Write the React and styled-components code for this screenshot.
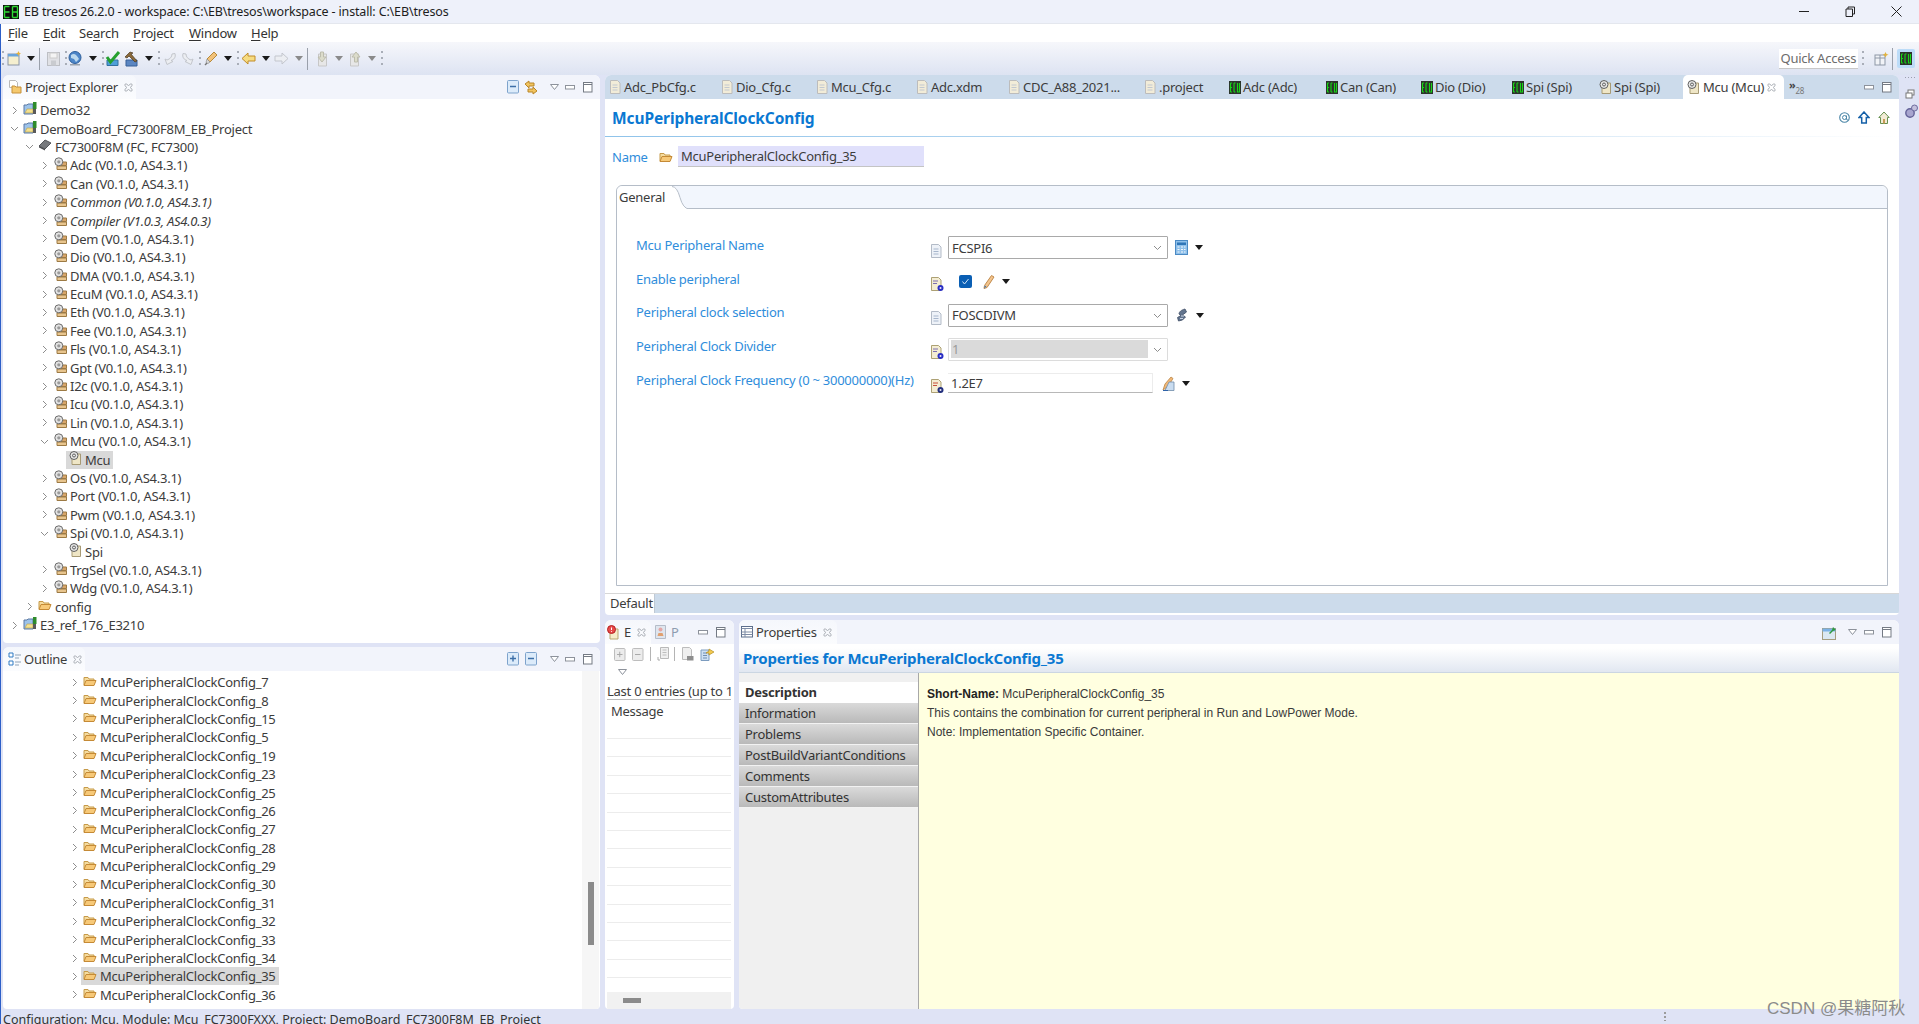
import React from 'react'
import styled, { createGlobalStyle } from 'styled-components'

const UI = '"Noto Sans", "Open Sans", sans-serif'

const Global = createGlobalStyle`
	html, body { margin: 0; padding: 0; background: #dfe3f5; overflow: hidden; }
	* { box-sizing: border-box; }
	#root { width: 1919px; height: 1024px; }
`

/* ---------- icons ---------- */
const Svg = ({ w = 16, h = 16, children }) => (
	<svg width={w} height={h} viewBox={`0 0 ${w} ${h}`} style={{ display: 'block', flex: 'none' }}>{children}</svg>
)
const Caret = () => <Svg w={8} h={5}><path d="M0 0h8L4 5z" fill="#1a1a1a" /></Svg>
const GreyCaret = () => <Svg w={8} h={5}><path d="M0 0h8L4 5z" fill="#8a8a8a" /></Svg>
const Grip = () => <Svg w={2} h={18}><path d="M0 1h2v2H0zM0 7h2v2H0zM0 13h2v2H0z" fill="#a9aeb8" /></Svg>
const Sep = () => <Svg w={1} h={22}><path d="M0 0h1v22H0z" fill="#9aa0ab" /></Svg>
const ThinSep = () => <Svg w={1} h={14}><path d="M0 0h1v14H0z" fill="#b4b4b4" /></Svg>
const Chevron = ({ open }) => (
	<Svg w={9} h={9}>
		<path d={open ? 'M1 3l3.5 3.5L8 3' : 'M3 1l3.5 3.5L3 8'} fill="none" stroke="#8d8d8d" strokeWidth="1" />
	</Svg>
)
const Folder = () => (
	<Svg w={14} h={12}>
		<path d="M1 10V2.5h4l1 1.5h5v1.5" fill="#f5dca0" stroke="#c69a49" />
		<path d="M1 10.5l2-5h10l-2 5z" fill="#f7c978" stroke="#c58a36" />
	</Svg>
)
const ProjectIco = () => (
	<Svg w={14} h={13}>
		<path d="M1 12V3h3l1-1h5v10z" fill="#9dc3ea" stroke="#5a79a3" />
		<path d="M2 11l2-4h6v4z" fill="#f3e08f" stroke="#b79f4a" strokeWidth=".6" />
		<path d="M10 0h3.500v7H10z" fill="#2e8b2b" />
		<path d="M10 7h3v5h-3z" fill="#5a5a5a" />
	</Svg>
)
const ChipIco = () => (
	<Svg w={14} h={12}>
		<path d="M1 7l6-6 6 3-6 6z" fill="#77797d" stroke="#55575b" />
		<path d="M1 7l6 3v1.5L1 8.500z" fill="#4a4b4e" />
	</Svg>
)
const ModuleIco = () => (
	<Svg w={13} h={13}>
		<path d="M6 5h6.500v3.500H6z" fill="#d9a66a" stroke="#9c7a44" />
		<path d="M3 9h9.500v3.500H3z" fill="#e8c58e" stroke="#9c7a44" />
		<circle cx="4.800" cy="4.800" r="4" fill="#e3e3e3" stroke="#6a6a6a" />
		<circle cx="4.800" cy="4.800" r="1.600" fill="#9a9a9a" />
	</Svg>
)
const ModuleDocIco = () => (
	<Svg w={13} h={14}>
		<path d="M3 3h8.500v10.500H3z" fill="#efe6c6" stroke="#a79a75" />
		<circle cx="5" cy="4.500" r="4" fill="#e6e6e6" stroke="#5f5f5f" />
		<circle cx="5" cy="4.500" r="1.500" fill="none" stroke="#5f5f5f" />
	</Svg>
)
const Ecu = () => (
	<Svg w={12} h={13}>
		<rect width="12" height="13" fill="#2c332c" />
		<path d="M1.500 2v9M1.500 2h1.500M1.500 6.500h1.500M1.500 11h1.500M5 2v9M5 2h1.500M5 11h1.500M8.500 2v9h2V2" fill="none" stroke="#16d616" strokeWidth="1.100" />
	</Svg>
)
const Close = () => (
	<Svg w={9} h={9}>
		<path d="M1 1l2 0 1.500 2L6 1h2v2L6 4.500 8 6v2H6L4.500 6 3 8H1V6l2-1.500L1 3z" fill="none" stroke="#a5a9b0" strokeWidth=".8" />
	</Svg>
)
const MenuTri = () => <Svg w={9} h={6}><path d="M.5.500h8L4.500 5.500z" fill="#fff" stroke="#8d929b" /></Svg>
const MinBtn = () => <Svg w={10} h={5}><rect x=".5" y=".5" width="9" height="3.500" fill="#fff" stroke="#8d929b" /></Svg>
const MaxBtn = () => (
	<Svg w={10} h={11}>
		<rect x=".5" y=".5" width="8.500" height="9.500" fill="#fff" stroke="#747a84" />
		<path d="M.5 2.500h8.500" stroke="#747a84" />
	</Svg>
)
const CollapseAll = () => (
	<Svg w={13} h={14}>
		<rect x=".5" y=".5" width="11" height="12.500" rx="1" fill="#dcebfa" stroke="#7ea3cc" />
		<path d="M3 6.500h6" stroke="#3d6fa8" strokeWidth="1.400" />
	</Svg>
)
const ExpandAll = () => (
	<Svg w={13} h={14}>
		<rect x=".5" y=".5" width="11" height="12.500" rx="1" fill="#dcebfa" stroke="#7ea3cc" />
		<path d="M3 6.500h6M6 3.500v6" stroke="#3d6fa8" strokeWidth="1.400" />
	</Svg>
)
const LinkArrows = () => (
	<Svg w={14} h={15}>
		<path d="M1 4l4-3v2h5v3H5v2z" fill="#f1c35d" stroke="#b9862a" />
		<path d="M13 11l-4 3v-2H4V9h5V7z" fill="#f1c35d" stroke="#b9862a" />
	</Svg>
)
const TreeIco = () => (
	<Svg w={13} h={14}>
		<path d="M1 1h4v4H1zM1 9h4v4H1z" fill="#fff" stroke="#2f7bc4" />
		<path d="M7 3h6M7 6h4M7 10h6M7 13h4" stroke="#8fa3b8" />
	</Svg>
)
const ProjExplorerIco = () => (
	<Svg w={14} h={14}>
		<path d="M1.500.5h6l2 2v5h-8z" fill="#fff" stroke="#b9b9b9" />
		<path d="M4 13V6h3l1 1h5v6z" fill="#f5c96e" stroke="#c6913a" />
	</Svg>
)
const ErrIco = () => (
	<Svg w={14} h={15}>
		<path d="M3 14h8V4H3z" fill="#f6ecc9" stroke="#b9a771" />
		<circle cx="4.500" cy="4.500" r="4" fill="#e84b4b" stroke="#b42020" />
		<path d="M4.500 2.500v2.500M4.500 6v.8" stroke="#fff" />
	</Svg>
)
const ProblemIco = () => (
	<Svg w={12} h={14}>
		<path d="M.5.5h10v13H.5z" fill="#dfe5ee" stroke="#b4bcc9" />
		<circle cx="5.500" cy="4.500" r="2" fill="#e3a6a6" />
		<path d="M2.500 11l1-3h4l1 3z" fill="#e0a070" />
	</Svg>
)
const PropsIco = () => (
	<Svg w={12} h={12}>
		<rect x=".5" y=".5" width="11" height="10.500" fill="#fff" stroke="#5d6f8c" />
		<path d="M.5 2.500h11M4 2.500v8.500M.5 6h11M.5 8.500h11" stroke="#7f8da6" />
	</Svg>
)
const TabDoc = () => (
	<Svg w={13} h={14}>
		<path d="M1.500.5h7l2.500 2.500v10.500H1.500z" fill="#f2ecd8" stroke="#bcbcbc" />
		<path d="M3.500 5h5M3.500 7.500h5M3.500 10h5" stroke="#c2c8d0" />
	</Svg>
)
const PaperIco = () => (
	<Svg w={13} h={14}>
		<path d="M1.500.5h7l2.500 2.500v10.500H1.500z" fill="#eef2f8" stroke="#b3bbc7" />
		<path d="M3.500 5h5M3.500 7.500h5M3.500 10h5" stroke="#a7b6cc" />
	</Svg>
)
const BoxPlus = () => (
	<Svg w={12} h={13}>
		<rect x=".5" y=".5" width="10.500" height="12" rx="1" fill="#ececec" stroke="#bdbdbd" />
		<path d="M3 6.500h5.500M5.750 3.700v5.500" stroke="#a9a9a9" />
	</Svg>
)
const BoxMinus = () => (
	<Svg w={12} h={13}>
		<rect x=".5" y=".5" width="10.500" height="12" rx="1" fill="#ececec" stroke="#bdbdbd" />
		<path d="M3 6.500h5.500" stroke="#a9a9a9" />
	</Svg>
)
const ScrollDoc = () => (
	<Svg w={13} h={14}>
		<path d="M3.500.5h8v11h-8z" fill="#efefef" stroke="#b9b9b9" />
		<path d="M5.500 3h4M5.500 5.500h4M5.500 8h4" stroke="#bdbdbd" />
		<path d="M1 10v3h2" fill="none" stroke="#aaa" />
	</Svg>
)
const ClearDoc = () => (
	<Svg w={13} h={14}>
		<path d="M1.500.5h7l2 2v10h-9z" fill="#efefef" stroke="#bcbcbc" />
		<path d="M6 9h6.500v4.500H6z" fill="#8e8e8e" />
	</Svg>
)
const OpenLog = () => (
	<Svg w={14} h={14}>
		<path d="M1 3h8v10.500H1z" fill="#cfe0f2" stroke="#7c9cbf" />
		<path d="M3 6h4M3 8.500h4M3 11h4" stroke="#6f8eb3" />
		<path d="M6 6l3-2V2l5 3-5 3V6z" fill="#f3c94f" stroke="#b48f25" strokeWidth=".7" />
	</Svg>
)
const PinIco = () => (
	<Svg w={15} h={15}>
		<rect x=".5" y="3.500" width="13" height="11" fill="#dbe8f2" stroke="#a59d7f" />
		<path d="M.5 3.500h13v3H.5z" fill="#7cb2e6" />
		<path d="M7 8l3-3 1-3 3 3-3 1-3 3z" fill="#2f9a3f" />
	</Svg>
)
const AtIco = () => (
	<Svg w={11} h={13}>
		<circle cx="5.500" cy="6.500" r="4.800" fill="none" stroke="#4c87a8" strokeWidth="1.100" />
		<circle cx="5.500" cy="6.500" r="2" fill="none" stroke="#4c87a8" />
		<path d="M7.500 4.500v3.500q0 1.200 1.400 1" fill="none" stroke="#4c87a8" />
	</Svg>
)
const UpIco = () => (
	<Svg w={12} h={13}>
		<path d="M6 1l5 5.500H8.300v5.500H3.700V6.500H1z" fill="#fff" stroke="#1560a8" strokeWidth="1.500" />
	</Svg>
)
const HomeIco = () => (
	<Svg w={12} h={13}>
		<path d="M6 1L.8 6.500h1.700v6h7v-6h1.700z" fill="#f3ecd6" stroke="#66914f" />
		<path d="M5 8h2v4.500H5z" fill="#c79b56" />
	</Svg>
)
const CalcIco = () => (
	<Svg w={13} h={15}>
		<rect x=".5" y=".5" width="12" height="14" fill="#8fc0ea" stroke="#4b8ac4" />
		<rect x="2" y="2.500" width="9" height="2.500" fill="#2f76b8" />
		<path d="M2.500 7h2M6 7h2M9 7h1.500M2.500 9.500h2M6 9.500h2M9 9.500h1.500M2.500 12h2M6 12h2M9 12h1.500" stroke="#f4f8fc" />
	</Svg>
)
const PencilIco = () => (
	<Svg w={12} h={15}>
		<path d="M8.500 1.500l2.500 1.500L4 13.500 1 14.500l.5-3z" fill="#f4c48c" stroke="#c08a4c" />
		<path d="M1 14.500l1-3 1.500 1z" fill="#3f78b8" />
	</Svg>
)
const ToolIco = () => (
	<Svg w={13} h={15}>
		<path d="M9 1C5 2 3 4 3 6l2 1.500-3.500 2 1 3.500 4-1 3-3-3-2 4-3z" fill="#62748e" stroke="#3b4a62" strokeWidth=".8" />
		<path d="M5 8h3M4 10.500h3" stroke="#c9d4e4" />
	</Svg>
)
const CalcPen = () => (
	<Svg w={13} h={15}>
		<path d="M1 14l2-6 6-7 2 1.500-5 8z" fill="#f2b877" stroke="#b98548" strokeWidth=".8" />
		<path d="M7 6h5v8.500H3z" fill="#c9dcf0" stroke="#6e8ba8" strokeWidth=".8" />
		<path d="M1 14.500h5" stroke="#2f62a8" />
	</Svg>
)
const AttrDoc = ({ mark, glyph = '#7c6fb0' }) => (
	<Svg w={14} h={15}>
		<path d="M1.500.5h7l2.500 2.500V13.500h-9.500z" fill="#f4edd3" stroke="#ada174" />
		<path d="M3 4h5M3 6.500h4" stroke={glyph} />
		<circle cx="10.500" cy="11" r="3" fill={mark} />
		<circle cx="10.500" cy="11" r="1" fill="#efe9f6" />
	</Svg>
)
const NewWiz = () => (
	<Svg w={15} h={15}>
		<rect x="1" y="3" width="11" height="11" fill="#f5efcf" stroke="#8a95a5" />
		<path d="M1 3h11v2.500H1z" fill="#6aa5dc" />
		<path d="M11.500 0l.8 1.800L14 2.500l-1.700.8-.8 1.800-.8-1.800L9 2.500l1.700-.7z" fill="#e8b33a" />
	</Svg>
)
const SaveIco = () => (
	<Svg w={13} h={14}>
		<rect x=".5" y=".5" width="12" height="13" fill="#e0e1e5" stroke="#bdbfc4" />
		<rect x="3" y="1" width="7" height="5" fill="#f4f4f4" stroke="#ccc" />
		<rect x="4" y="8.500" width="5" height="5" fill="#c9cbcf" />
	</Svg>
)
const GlobeIco = () => (
	<Svg w={15} h={15}>
		<circle cx="7" cy="6.500" r="6" fill="#4d86c9" stroke="#2e5f9a" />
		<path d="M3 4q3-2 5 0t3 4l-3 3-2-3-3-1z" fill="#bcd9ee" />
		<path d="M2 13h10v1.500H2z" fill="#9ba3ad" />
	</Svg>
)
const CheckBuild = () => (
	<Svg w={16} h={15}>
		<path d="M2 9h11v5.500H2z" fill="#4e9fd8" stroke="#32709f" />
		<path d="M2 6l3.500 5L14 1" fill="none" stroke="#25a02f" strokeWidth="3" />
	</Svg>
)
const BuildIco = () => (
	<Svg w={15} h={16}>
		<path d="M2 15V9h11v6z" fill="#5b86c2" stroke="#375f97" />
		<path d="M1 6l5-5 3 1-2 1 6 7-2 1-6-6-2 2z" fill="#8b6a3a" stroke="#4c3a1f" strokeWidth=".7" />
	</Svg>
)
const UndoIco = () => (
	<Svg w={14} h={14}>
		<path d="M12 1.500c1 4-1 6-4 7l2 1-6 3-2-5.500 2 1c3-1 5-3 5-6z" fill="#eceef2" stroke="#c3c6cc" />
	</Svg>
)
const RedoIco = () => (
	<Svg w={14} h={14}>
		<path d="M2 1.500c-1 4 1 6 4 7l-2 1 6 3 2-5.500-2 1c-3-1-5-3-5-6z" fill="#eceef2" stroke="#c3c6cc" />
	</Svg>
)
const PinEdit = () => (
	<Svg w={15} h={15}>
		<path d="M10 1l3 3-7 7-3-3z" fill="#f2c27a" stroke="#b78a3a" />
		<path d="M3 8l3 3-2 1.500-2-1z" fill="#d9d9d9" stroke="#8e8e8e" strokeWidth=".7" />
		<path d="M1 14l2-2" stroke="#777" strokeWidth="1.400" />
	</Svg>
)
const BackArrow = () => (
	<Svg w={15} h={13}>
		<path d="M1 6.500L7 1v3h7v5H7v3z" fill="#f6dc82" stroke="#c28c26" />
	</Svg>
)
const FwdArrow = () => (
	<Svg w={15} h={13}>
		<path d="M14 6.500L8 1v3H1v5h7v3z" fill="#eceef2" stroke="#c3c6cd" />
	</Svg>
)
const DocDown = () => (
	<Svg w={14} h={16}>
		<path d="M3.500 3h8v12h-8z" fill="#e7e7e7" stroke="#c7c7c7" />
		<path d="M5.500 1h3v5H11l-4 5-4-5h2.500z" fill="#dcdccb" stroke="#bdbdad" />
	</Svg>
)
const DocUp = () => (
	<Svg w={14} h={16}>
		<path d="M1.500 3h8v12h-8z" fill="#e7e7e7" stroke="#c7c7c7" />
		<path d="M5.500 11h3V6H11L7 1 3 6h2.500z" fill="#dcdccb" stroke="#bdbdad" />
	</Svg>
)
const PerspIco = () => (
	<Svg w={15} h={15}>
		<rect x="1" y="4" width="10" height="10" fill="#f1f3f7" stroke="#8d97a6" />
		<path d="M1 7h10M6 4v10" stroke="#8d97a6" />
		<path d="M11.500 1l1 2 2 .8-2 .7-1 2-1-2-2-.7 2-.8z" fill="#e2b23d" />
	</Svg>
)
const RestoreTrim = () => (
	<Svg w={10} h={10}>
		<rect x="3" y="1" width="6" height="5" fill="#fff" stroke="#777" />
		<rect x="1" y="4" width="6" height="5" fill="#fff" stroke="#777" />
	</Svg>
)
const GearTrim = () => (
	<Svg w={13} h={15}>
		<circle cx="5" cy="9" r="4.200" fill="#a8a5cf" stroke="#656399" strokeWidth="1.400" />
		<circle cx="9.500" cy="4" r="3" fill="#c3c1de" stroke="#6d6b9e" />
	</Svg>
)
const LogoDisplay = () => (
	<Svg w={16} h={14}>
		<rect width="16" height="14" fill="#0c0c0c" />
		<path d="M1.500 1.500h5M1.500 1.500v11M1.500 7h5M1.500 12.500h5M9.500 1.500h5M9.500 1.500v11M9.500 7h5M9.500 12.500h5M14.500 1.500v11" fill="none" stroke="#2fdc35" strokeWidth="1.400" />
	</Svg>
)

/* ---------- shell ---------- */
const Page = styled.div`
	width: 1919px;
	height: 1024px;
	position: relative;
	overflow: hidden;
	display: flex;
	flex-direction: column;
	background: #dfe3f5;
	font-family: ${UI};
	font-size: 13px;
	letter-spacing: -0.25px;
	color: #3c3c3c;
`
const TitleBar = styled.div`
	height: 24px;
	flex: none;
	display: flex;
	align-items: center;
	background: #eef1fa;
	padding-left: 3px;
	border-bottom: 1px solid #e4e7ee;
`
const TitleText = styled.span`
	margin-left: 5px;
	font-size: 12.5px;
	letter-spacing: -0.15px;
	color: #1d1d1d;
`
const WinButtons = styled.div`
	margin-left: auto;
	display: flex;
	align-items: center;
`
const WinBtn = styled.div`
	width: 46px;
	height: 24px;
	display: flex;
	align-items: center;
	justify-content: center;
`
const Body = styled.div`
	flex: 1;
	min-height: 0;
	display: flex;
	flex-direction: column;
	border-left: 1px solid #2d5fc8;
`
const MenuBar = styled.div`
	height: 18px;
	flex: none;
	background: #fff;
	display: flex;
	align-items: center;
	color: #333;
`
const MenuItem = styled.span`
	width: ${p => p.$w}px;
	u { text-underline-offset: 2px; }
	&:first-child { margin-left: 7px; }
`
const ToolBar = styled.div`
	height: 33px;
	flex: none;
	display: flex;
	align-items: center;
	background: linear-gradient(#f6f7fb, #dde3f2);
`
const QuickAccess = styled.div`
	width: 79px;
	height: 20px;
	margin-left: auto;
	background: #fff;
	border-bottom: 1px solid #c8c8c8;
	line-height: 19px;
	padding-left: 2px;
	color: #6c6c6c;
	white-space: nowrap;
`
const ToolRight = styled.div`
	margin-left: 4px;
	margin-right: 4px;
`
const EcuFrame = styled.div`
	padding: 3px;
	background: #bcdcf8;
	border-radius: 2px;
`
const Slot = styled.div`
	flex: none;
	display: flex;
	align-items: center;
	justify-content: center;
	width: ${p => p.$w}px;
	margin-left: ${p => p.$ml}px;
`
const StripRow = styled.div`
	display: flex;
	align-items: center;
	flex: none;
`
const Workspace = styled.div`
	height: 934px;
	flex: none;
	display: flex;
	padding-left: 2px;
`
const LeftColumn = styled.div`
	width: 597px;
	flex: none;
	display: flex;
	flex-direction: column;
	gap: 4px;
`
const CenterColumn = styled.div`
	width: 1294px;
	flex: none;
	margin-left: 5px;
	display: flex;
	flex-direction: column;
	gap: 5px;
`
const TrimBar = styled.div`
	width: 20px;
	flex: none;
	padding: 2px 0 0 6px;
	display: flex;
	flex-direction: column;
	gap: 5px;
`
const TrimGrip = styled.div`
	width: 12px;
	height: 1px;
	margin-bottom: 6px;
	background: repeating-linear-gradient(90deg, #9b9fae 0 1px, transparent 1px 3px);
`
const Panel = styled.div`
	height: ${p => p.$h}px;
	width: ${p => (p.$w ? p.$w + 'px' : 'auto')};
	flex: none;
	background: #fff;
	border-radius: 6px 6px 4px 4px;
	display: flex;
	flex-direction: column;
	overflow: hidden;
`
const PanelTabs = styled.div`
	height: 24px;
	flex: none;
	display: flex;
	align-items: center;
	background: #f2f4fb;
`
const ViewTab = styled.div`
	height: 100%;
	width: ${p => p.$w}px;
	flex: none;
	display: flex;
	align-items: center;
	padding-left: ${p => p.$pl || 5}px;
	background: ${p => (p.$active ? 'linear-gradient(#f5f7fc, #fbfcfe)' : 'transparent')};
	border-radius: 6px 6px 0 0;
	color: ${p => (p.$dim ? '#8e9cb0' : '#3c3c3c')};
`
const TabLabel = styled.span`
	margin: 0 ${p => p.$mr ?? 6}px 0 ${p => p.$ml || 3}px;
	white-space: nowrap;
`
const ViewActions = styled.div`
	margin-left: auto;
	margin-right: ${p => p.$mr || 7}px;
	display: flex;
	align-items: center;
`
const TreeBody = styled.div`
	flex: 1;
	min-height: 0;
	display: flex;
	overflow: hidden;
`
const TreeList = styled.div`
	flex: 1;
	padding-top: 2px;
`
const TreeRow = styled.div`
	height: 18.4px;
	display: flex;
	align-items: center;
	padding-left: ${p => 5 + p.$level * 15}px;
	font-style: ${p => (p.$italic ? 'italic' : 'normal')};
	white-space: nowrap;
`
const ChevronSlot = styled.div`
	width: 13px;
	flex: none;
	display: flex;
	justify-content: center;
`
const RowBody = styled.div`
	display: flex;
	align-items: center;
	height: 18px;
	padding: 0 3px 0 2px;
	background: ${p => (p.$selected ? '#d9d9d9' : 'transparent')};
`
const RowIcon = styled.div`
	width: 14px;
	flex: none;
	display: flex;
	justify-content: center;
	margin-top: -3px;
`
const RowText = styled.span`
	margin-left: 3px;
`
const ScrollTrack = styled.div`
	width: 17px;
	flex: none;
	margin-right: 1px;
	background: #f6f6f6;
	padding: 211px 0 0 6px;
`
const ScrollThumb = styled.div`
	width: 6px;
	height: 63px;
	background: #8b8b8b;
`

/* ---------- editor ---------- */
const EditorTabs = styled.div`
	height: 24px;
	flex: none;
	display: flex;
	align-items: center;
	background: #ccdbeb;
`
const EditorTab = styled.div`
	height: 100%;
	width: ${p => p.$w}px;
	flex: none;
	display: flex;
	align-items: center;
	padding-left: 4px;
	color: #3c3c3c;
	background: ${p => (p.$active ? '#fff' : 'transparent')};
	border-radius: 5px 5px 0 0;
	gap: ${p => (p.$active ? 3 : 2)}px;
	white-space: nowrap;
`
const OverflowMark = styled.span`
	margin-left: 5px;
	font-size: 11px;
	font-weight: 700;
	color: #444;
	line-height: 1;
	margin-top: -6px;
	small {
		font-size: 8px;
		font-weight: 400;
		color: #777;
		position: relative;
		top: 5px;
	}
`
const FormHeader = styled.div`
	height: 38px;
	flex: none;
	display: flex;
	align-items: center;
	padding: 0 9px 0 7px;
	border-bottom: 1px solid transparent;
	border-image: linear-gradient(90deg, #8fc3ea, #d5e7f6 70%, #fff) 1;
	gap: 8px;
`
const FormTitle = styled.h1`
	margin: 0 auto 0 0;
	font-size: 15.5px;
	letter-spacing: -0.1px;
	font-weight: 700;
	color: #0a78d2;
`
const EditorBody = styled.div`
	flex: 1;
	min-height: 0;
	padding: 9px 11px 0 7px;
	display: flex;
	flex-direction: column;
`
const NameRow = styled.div`
	height: 21px;
	display: flex;
	align-items: center;
	flex: none;
`
const NameLabel = styled.span`
	width: 47px;
	color: #2f8ddb;
`
const NameInput = styled.div`
	width: 246px;
	height: 21px;
	margin-left: 5px;
	background: #e0e0fb;
	border-bottom: 1px solid #c4c4c4;
	padding-left: 3px;
	line-height: 20px;
`
const Section = styled.div`
	margin: 18px 0 0 4px;
	height: 401px;
	flex: none;
	border: 1px solid #b5bdc8;
	border-radius: 6px 6px 0 0;
`
const SectionStrip = styled.div`
	height: 23px;
	display: flex;
	background: #f2f6fd;
	border-bottom: 1px solid #b5bdc8;
	border-radius: 6px 6px 0 0;
`
const SectionTab = styled.div`
	height: 23px;
	width: 55px;
	background: #fff;
	padding-left: 2px;
	line-height: 22px;
	border-radius: 6px 0 0 0;
`
const FormGrid = styled.div`
	padding: 22px 0 0 19px;
`
const FormRow = styled.div`
	height: 33.8px;
	display: flex;
	align-items: center;
`
const FieldLabel = styled.span`
	width: 292px;
	flex: none;
	color: #2f8ddb;
	margin-bottom: 6px;
	white-space: nowrap;
`
const AttrSlot = styled.div`
	width: 17px;
	flex: none;
	margin-top: 6px;
	display: flex;
	justify-content: center;
`
const Combo = styled.div`
	width: 220px;
	height: 23px;
	margin-left: 3px;
	flex: none;
	border: 1px solid ${p => (p.$off ? '#dcdcdc' : '#a9a9a9')};
	background: #fff;
	display: flex;
	align-items: center;
	padding: 0 5px 0 2px;
	justify-content: space-between;
	border-radius: 1px;
`
const ComboValue = styled.span`
	flex: ${p => (p.$off ? 1 : 'none')};
	background: ${p => (p.$off ? '#dadada' : 'transparent')};
	color: ${p => (p.$off ? '#9a9a9a' : '#3c3c3c')};
	line-height: 18px;
	padding-left: 1px;
	margin-right: ${p => (p.$off ? 5 : 0)}px;
`
const TextField = styled.div`
	width: 205px;
	height: 20px;
	margin-left: 3px;
	flex: none;
	border-top: 1px solid #ececec;
	border-right: 1px solid #ececec;
	border-bottom: 1px solid #b8b8b8;
	padding-left: 3px;
	line-height: 19px;
`
const Check = styled.div`
	width: 13px;
	height: 13px;
	margin-left: 14px;
	flex: none;
	background: #0a5fb4;
	border-radius: 2px;
	display: flex;
	align-items: center;
	justify-content: center;
`
const Trailing = styled.div`
	display: flex;
	align-items: center;
	gap: 7px;
	margin-left: ${p => p.$ml}px;
`
const DefaultBar = styled.div`
	margin: auto -11px 2px -7px;
	height: 20px;
	flex: none;
	background: #ccdbeb;
	border-top: 1px solid #d7d7d7;
	display: flex;
`
const DefaultTab = styled.div`
	width: 50px;
	height: 19px;
	background: #fff;
	padding-left: 5px;
	line-height: 18px;
	border-right: 1px solid #bfc9d4;
`

/* ---------- bottom ---------- */
const BottomRow = styled.div`
	flex: 1;
	min-height: 0;
	display: flex;
	gap: 5px;
`
const ProblemsTools = styled.div`
	height: 20px;
	flex: none;
	padding-top: 3px;
	margin-left: 9px;
`
const TriRow = styled.div`
	height: 16px;
	padding-left: 13px;
	display: flex;
	align-items: center;
`
const ProblemsSummary = styled.div`
	margin: 3px 0 0 2px;
	height: 17px;
	line-height: 17px;
	width: 124px;
	flex: none;
	overflow: hidden;
	white-space: nowrap;
	border-bottom: 1px solid #b9b9b9;
`
const ProblemsTable = styled.div`
	margin-left: 2px;
	width: 124px;
	flex: 1;
	min-height: 0;
	overflow: hidden;
`
const TableHead = styled.div`
	height: 39px;
	padding: 2px 0 0 4px;
	line-height: 18px;
	border-bottom: 1px solid #ececec;
`
const TableLine = styled.div`
	height: 18.400px;
	border-bottom: 1px solid #ececec;
`
const HScroll = styled.div`
	margin-left: 2px;
	width: 124px;
	height: 17px;
	flex: none;
	background: #f1f1f1;
	display: flex;
	align-items: center;
	padding-left: 16px;
`
const HThumb = styled.div`
	width: 18px;
	height: 5px;
	background: #8b8b8b;
`
const PropsHeader = styled.div`
	height: 29px;
	flex: none;
	padding-left: 4px;
	display: flex;
	align-items: center;
	background: linear-gradient(#fff 15%, #e1e7f1);
	border-bottom: 1px solid #cbd6e2;
`
const PropsTitle = styled.h2`
	margin: 0;
	font-size: 15px;
	letter-spacing: -0.2px;
	font-weight: 700;
	color: #0a78d2;
`
const PropsBody = styled.div`
	flex: 1;
	min-height: 0;
	display: flex;
`
const SideList = styled.div`
	width: 180px;
	flex: none;
	background: #f0f0f0;
	padding-top: 9px;
	border-right: 1px solid #a8a8a8;
`
const SideItem = styled.div`
	height: 21px;
	padding-left: 6px;
	line-height: 20px;
	color: #333;
	white-space: nowrap;
	font-weight: ${p => (p.$active ? 700 : 400)};
	background: ${p => (p.$active ? '#fff' : 'linear-gradient(#dadada, #b9b9b9)')};
	border-bottom: 1px solid ${p => (p.$active ? '#fff' : '#f2f2f2')};
`
const YellowPane = styled.div`
	flex: 1;
	background: #ffffe0;
	padding: 12px 0 0 8px;
	font-family: "Liberation Sans", Arial, sans-serif;
	font-size: 12px;
	letter-spacing: 0;
	line-height: 19.2px;
	color: #3a3a3a;
	b { color: #222; }
`
const StatusBar = styled.div`
	height: 15px;
	flex: none;
	padding-left: 2px;
	font-size: 12.500px;
	letter-spacing: 0;
	line-height: 21px;
	color: #333;
	overflow: hidden;
	white-space: nowrap;
	position: relative;
`
const StatusGrip = styled.div`
	position: absolute;
	left: 1663px;
	top: 3px;
	width: 2px;
	height: 9px;
	background: repeating-linear-gradient(#9b9b9b 0 2px, transparent 2px 4px);
`
const Watermark = styled.div`
	position: absolute;
	left: 1767px;
	top: 994px;
	font-family: "Liberation Sans", "Noto Sans CJK SC", sans-serif;
	font-size: 17px;
	letter-spacing: 0;
	color: #8b8b8b;
	white-space: nowrap;
`

/* ---------- data ---------- */
const modules = [
	['Adc (V0.1.0, AS4.3.1)'], ['Can (V0.1.0, AS4.3.1)'], ['Common (V0.1.0, AS4.3.1)', 'i'], ['Compiler (V1.0.3, AS4.0.3)', 'i'],
	['Dem (V0.1.0, AS4.3.1)'], ['Dio (V0.1.0, AS4.3.1)'], ['DMA (V0.1.0, AS4.3.1)'], ['EcuM (V0.1.0, AS4.3.1)'],
	['Eth (V0.1.0, AS4.3.1)'], ['Fee (V0.1.0, AS4.3.1)'], ['Fls (V0.1.0, AS4.3.1)'], ['Gpt (V0.1.0, AS4.3.1)'],
	['I2c (V0.1.0, AS4.3.1)'], ['Icu (V0.1.0, AS4.3.1)'], ['Lin (V0.1.0, AS4.3.1)'],
]
const projectTree = [
	{ text: 'Demo32', level: 0, icon: ProjectIco },
	{ text: 'DemoBoard_FC7300F8M_EB_Project', level: 0, icon: ProjectIco, open: true },
	{ text: 'FC7300F8M (FC, FC7300)', level: 1, icon: ChipIco, open: true },
	...modules.map(([text, i]) => ({ text, level: 2, icon: ModuleIco, italic: !!i })),
	{ text: 'Mcu (V0.1.0, AS4.3.1)', level: 2, icon: ModuleIco, open: true },
	{ text: 'Mcu', level: 3, icon: ModuleDocIco, leaf: true, selected: true },
	{ text: 'Os (V0.1.0, AS4.3.1)', level: 2, icon: ModuleIco },
	{ text: 'Port (V0.1.0, AS4.3.1)', level: 2, icon: ModuleIco },
	{ text: 'Pwm (V0.1.0, AS4.3.1)', level: 2, icon: ModuleIco },
	{ text: 'Spi (V0.1.0, AS4.3.1)', level: 2, icon: ModuleIco, open: true },
	{ text: 'Spi', level: 3, icon: ModuleDocIco, leaf: true },
	{ text: 'TrgSel (V0.1.0, AS4.3.1)', level: 2, icon: ModuleIco },
	{ text: 'Wdg (V0.1.0, AS4.3.1)', level: 2, icon: ModuleIco },
	{ text: 'config', level: 1, icon: Folder },
	{ text: 'E3_ref_176_E3210', level: 0, icon: ProjectIco },
]
const outlineTree = [7, 8, 15, 5, 19, 23, 25, 26, 27, 28, 29, 30, 31, 32, 33, 34, 35, 36].map(n => ({
	text: `McuPeripheralClockConfig_${n}`, level: 4, icon: Folder, selected: n === 35,
}))
const editorTabs = [
	['Adc_PbCfg.c', 112], ['Dio_Cfg.c', 95], ['Mcu_Cfg.c', 100], ['Adc.xdm', 92], ['CDC_A88_2021...', 136], ['.project', 85],
	['Adc (Adc)', 97, 'ecu'], ['Can (Can)', 95, 'ecu'], ['Dio (Dio)', 91, 'ecu'], ['Spi (Spi)', 87, 'ecu'], ['Spi (Spi)', 88, 'mod'],
]
const sideItems = ['Description', 'Information', 'Problems', 'PostBuildVariantConditions', 'Comments', 'CustomAttributes']

// items sit at given centre x, distances turned into margins between them
const Strip = ({ items }) => {
	let edge = null
	return (
		<StripRow>
			{items.map(([center, Icon, w = 15, props], i) => {
				const ml = edge === null ? 0 : center - w / 2 - edge
				edge = center + w / 2
				return <Slot key={i} $w={w} $ml={ml}><Icon {...props} /></Slot>
			})}
		</StripRow>
	)
}

const Tree = ({ rows }) => (
	<TreeList>
		{rows.map(({ text, level, icon: Icon, open, italic, leaf, selected }) => (
			<TreeRow key={text + level} $level={level} $italic={italic}>
				<ChevronSlot>{!leaf && <Chevron open={open} />}</ChevronSlot>
				<RowBody $selected={selected}>
					<RowIcon><Icon /></RowIcon>
					<RowText>{text}</RowText>
				</RowBody>
			</TreeRow>
		))}
	</TreeList>
)

const FramedEcu = () => <EcuFrame><Ecu /></EcuFrame>

const toolItems = [
	[3, Grip, 3], [15, NewWiz], [31, Caret, 8], [40, Sep, 1], [54, SaveIco], [66, Grip, 3], [76, GlobeIco], [93, Caret, 8],
	[103, Grip, 3], [113, CheckBuild], [132, BuildIco], [149, Caret, 8], [159, Grip, 3], [170, UndoIco], [188, RedoIco],
	[200, Grip, 3], [212, PinEdit], [228, Caret, 8], [238, Grip, 3], [249, BackArrow], [266, Caret, 8], [282, FwdArrow],
	[299, GreyCaret, 8], [308, Sep, 1], [322, DocDown], [339, GreyCaret, 8], [356, DocUp], [372, GreyCaret, 8], [382, Grip, 3],
]

function App() {
	return (
		<Page>
			<Global />
			<TitleBar>
				<LogoDisplay />
				<TitleText>EB tresos 26.2.0 - workspace: C:\EB\tresos\workspace - install: C:\EB\tresos</TitleText>
				<WinButtons>
					<WinBtn><Svg w={11} h={11}><path d="M0 5.500h10" stroke="#222" /></Svg></WinBtn>
					<WinBtn><Svg w={11} h={11}><path d="M1 3h6.500v7.500H1zM3 3V1h6.500v7H7.500" fill="none" stroke="#222" /></Svg></WinBtn>
					<WinBtn><Svg w={11} h={11}><path d="M.5.500l10 10M10.500.500l-10 10" stroke="#222" /></Svg></WinBtn>
				</WinButtons>
			</TitleBar>
			<Body>
				<MenuBar>
					<MenuItem $w={35}><u>F</u>ile</MenuItem>
					<MenuItem $w={36}><u>E</u>dit</MenuItem>
					<MenuItem $w={54}>Se<u>a</u>rch</MenuItem>
					<MenuItem $w={56}><u>P</u>roject</MenuItem>
					<MenuItem $w={62}><u>W</u>indow</MenuItem>
					<MenuItem $w={40}><u>H</u>elp</MenuItem>
				</MenuBar>
				<ToolBar>
					<Strip items={toolItems} />
					<QuickAccess>Quick Access</QuickAccess>
					<ToolRight>
						<Strip items={[[1862, Grip, 3], [1880, PerspIco], [1891, Sep, 1], [1905, FramedEcu, 18]]} />
					</ToolRight>
				</ToolBar>
				<Workspace>
					<LeftColumn>
						<Panel $h={568}>
							<PanelTabs>
								<ViewTab $w={133} $active>
									<ProjExplorerIco />
									<TabLabel>Project Explorer</TabLabel>
									<Close />
								</ViewTab>
								<ViewActions>
									<Strip items={[[510, CollapseAll], [528, LinkArrows], [551, MenuTri, 9], [567, MinBtn, 10], [585, MaxBtn, 10]]} />
								</ViewActions>
							</PanelTabs>
							<TreeBody><Tree rows={projectTree} /></TreeBody>
						</Panel>
						<Panel $h={362}>
							<PanelTabs>
								<ViewTab $w={82} $active>
									<TreeIco />
									<TabLabel>Outline</TabLabel>
									<Close />
								</ViewTab>
								<ViewActions>
									<Strip items={[[510, ExpandAll], [528, CollapseAll], [551, MenuTri, 9], [567, MinBtn, 10], [585, MaxBtn, 10]]} />
								</ViewActions>
							</PanelTabs>
							<TreeBody>
								<Tree rows={outlineTree} />
								<ScrollTrack><ScrollThumb /></ScrollTrack>
							</TreeBody>
						</Panel>
					</LeftColumn>
					<CenterColumn>
						<Panel $h={540}>
							<EditorTabs>
								{editorTabs.map(([label, w, kind], i) => (
									<EditorTab key={i} $w={w}>
										{kind === 'ecu' ? <Ecu /> : kind === 'mod' ? <ModuleDocIco /> : <TabDoc />}
										<span>{label}</span>
									</EditorTab>
								))}
								<EditorTab $w={101} $active>
									<ModuleDocIco />
									<span>Mcu (Mcu)</span>
									<Close />
								</EditorTab>
								<OverflowMark>»<small>28</small></OverflowMark>
								<ViewActions>
									<Strip items={[[1866, MinBtn, 10], [1884, MaxBtn, 10]]} />
								</ViewActions>
							</EditorTabs>
							<FormHeader>
								<FormTitle>McuPeripheralClockConfig</FormTitle>
								<AtIco />
								<UpIco />
								<HomeIco />
							</FormHeader>
							<EditorBody>
								<NameRow>
									<NameLabel>Name</NameLabel>
									<Folder />
									<NameInput>McuPeripheralClockConfig_35</NameInput>
								</NameRow>
								<Section>
									<SectionStrip>
										<SectionTab>General</SectionTab>
										<Svg w={17} h={23}>
											<path d="M0 0q5 0 8 11t9 12H0z" fill="#fff" />
											<path d="M0 .5q5 0 8 11t9 11.500" fill="none" stroke="#b5bdc8" />
										</Svg>
									</SectionStrip>
									<FormGrid>
										<FormRow>
											<FieldLabel>Mcu Peripheral Name</FieldLabel>
											<AttrSlot><PaperIco /></AttrSlot>
											<Combo>
												<ComboValue>FCSPI6</ComboValue>
												<Chevron open />
											</Combo>
											<Trailing $ml={7}><CalcIco /><Caret /></Trailing>
										</FormRow>
										<FormRow>
											<FieldLabel>Enable peripheral</FieldLabel>
											<AttrSlot><AttrDoc mark="#2a2fc4" /></AttrSlot>
											<Check>
												<Svg w={9} h={9}><path d="M1.500 4.500l2 2.500 4-5" fill="none" stroke="#cfe4f8" /></Svg>
											</Check>
											<Trailing $ml={11}><PencilIco /><Caret /></Trailing>
										</FormRow>
										<FormRow>
											<FieldLabel>Peripheral clock selection</FieldLabel>
											<AttrSlot><PaperIco /></AttrSlot>
											<Combo>
												<ComboValue>FOSCDIVM</ComboValue>
												<Chevron open />
											</Combo>
											<Trailing $ml={8}><ToolIco /><Caret /></Trailing>
										</FormRow>
										<FormRow>
											<FieldLabel>Peripheral Clock Divider</FieldLabel>
											<AttrSlot><AttrDoc mark="#2a2fc4" /></AttrSlot>
											<Combo $off>
												<ComboValue $off>1</ComboValue>
												<Chevron open />
											</Combo>
										</FormRow>
										<FormRow>
											<FieldLabel>Peripheral Clock Frequency (0 ~ 300000000)(Hz)</FieldLabel>
											<AttrSlot><AttrDoc mark="#23307e" glyph="#c8503c" /></AttrSlot>
											<TextField>1.2E7</TextField>
											<Trailing $ml={9}><CalcPen /><Caret /></Trailing>
										</FormRow>
									</FormGrid>
								</Section>
								<DefaultBar><DefaultTab>Default</DefaultTab></DefaultBar>
							</EditorBody>
						</Panel>
						<BottomRow>
							<Panel $h={389} $w={129}>
								<PanelTabs>
									<ViewTab $w={46} $active $pl={2}>
										<ErrIco />
										<TabLabel $ml={3} $mr={6}>E</TabLabel>
										<Close />
									</ViewTab>
									<ViewTab $w={28} $dim $pl={4}>
										<ProblemIco />
										<TabLabel $ml={4} $mr={0}>P</TabLabel>
									</ViewTab>
									<ViewActions $mr={8}>
										<Strip items={[[700, MinBtn, 10], [718, MaxBtn, 10]]} />
									</ViewActions>
								</PanelTabs>
								<ProblemsTools>
									<Strip items={[[620, BoxPlus, 12], [638, BoxMinus, 12], [650, ThinSep, 1], [663, ScrollDoc, 13], [674, ThinSep, 1], [687, ClearDoc, 13], [707, OpenLog, 14]]} />
								</ProblemsTools>
								<TriRow><MenuTri /></TriRow>
								<ProblemsSummary>Last 0 entries (up to 1</ProblemsSummary>
								<ProblemsTable>
									<TableHead>Message</TableHead>
									{Array.from({ length: 13 }, (_, i) => <TableLine key={i} />)}
								</ProblemsTable>
								<HScroll><HThumb /></HScroll>
							</Panel>
							<Panel $h={389} $w={1160}>
								<PanelTabs>
									<ViewTab $w={98} $active $pl={2}>
										<PropsIco />
										<TabLabel $ml={3}>Properties</TabLabel>
										<Close />
									</ViewTab>
									<ViewActions>
										<Strip items={[[1826, PinIco], [1849, MenuTri, 9], [1866, MinBtn, 10], [1884, MaxBtn, 10]]} />
									</ViewActions>
								</PanelTabs>
								<PropsHeader><PropsTitle>Properties for McuPeripheralClockConfig_35</PropsTitle></PropsHeader>
								<PropsBody>
									<SideList>
										{sideItems.map((s, i) => <SideItem key={s} $active={i === 0}>{s}</SideItem>)}
									</SideList>
									<YellowPane>
										<div><b>Short-Name:</b> McuPeripheralClockConfig_35</div>
										<div>This contains the combination for current peripheral in Run and LowPower Mode.</div>
										<div>Note: Implementation Specific Container.</div>
									</YellowPane>
								</PropsBody>
							</Panel>
						</BottomRow>
					</CenterColumn>
					<TrimBar>
						<TrimGrip />
						<RestoreTrim />
						<GearTrim />
					</TrimBar>
				</Workspace>
				<StatusBar>
					Configuration: Mcu, Module: Mcu_FC7300FXXX, Project: DemoBoard_FC7300F8M_EB_Project
					<StatusGrip />
				</StatusBar>
			</Body>
			<Watermark>CSDN @果糖阿秋</Watermark>
		</Page>
	)
}

export default App
